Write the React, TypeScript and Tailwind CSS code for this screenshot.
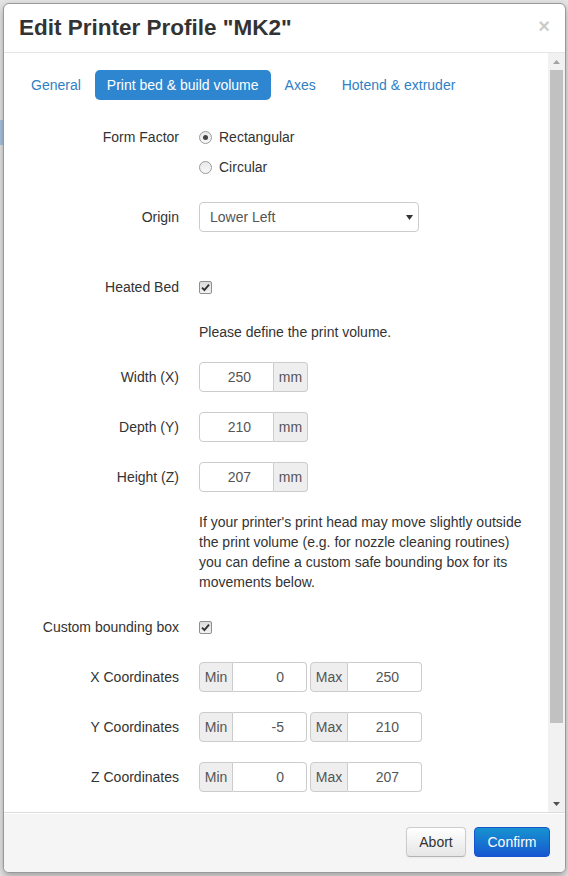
import React from "react";

const font = "font-['Liberation_Sans',Arial,Helvetica,sans-serif]";

function Radio({ checked }: { checked?: boolean }) {
  return (
    <span className="w-[13px] h-[13px] rounded-full border border-[#9a9a9a] bg-gradient-to-b from-[#e9e9e9] to-[#f8f8f8] flex items-center justify-center">
      {checked && <span className="w-[5px] h-[5px] rounded-full bg-[#444]" />}
    </span>
  );
}

function Checkbox() {
  return (
    <span className="w-[13px] h-[13px] rounded-[2px] border border-[#8f8f8f] bg-gradient-to-b from-[#dcdcdc] to-[#f3f3f3] flex items-center justify-center">
      <svg width="9" height="9" viewBox="0 0 9 9">
        <path d="M1 4.6 L3.4 7 L8 1.6" fill="none" stroke="#333" strokeWidth="1.9" />
      </svg>
    </span>
  );
}

function Row({ label, children, className = "" }: { label?: string; children: React.ReactNode; className?: string }) {
  return (
    <div className={`flex ${className}`}>
      <div className="w-[160px] shrink-0 text-right pt-[5px] leading-5 text-[#333]">{label}</div>
      <div className="ml-[20px]">{children}</div>
    </div>
  );
}

function MmInput({ value }: { value: string }) {
  return (
    <div className="flex h-[30px]">
      <div className="w-[75px] h-[30px] border border-[#ccc] rounded-l-[4px] bg-white text-right pr-[22px] leading-[28px] text-[#555]">{value}</div>
      <div className="w-[34px] h-[30px] border border-l-0 border-[#ccc] rounded-r-[4px] bg-[#eee] text-center leading-[28px] text-[#555]">mm</div>
    </div>
  );
}

function MinMax({ min, max }: { min: string; max: string }) {
  return (
    <div className="flex h-[30px]">
      <div className="w-[34px] h-[30px] border border-[#ccc] rounded-l-[4px] bg-[#eee] text-center leading-[28px] text-[#555]">Min</div>
      <div className="w-[74px] h-[30px] border border-l-0 border-[#ccc] rounded-r-[4px] bg-white text-right pr-[22px] leading-[28px] text-[#555]">{min}</div>
      <div className="ml-[3px] w-[38px] h-[30px] border border-[#ccc] rounded-l-[4px] bg-[#eee] text-center leading-[28px] text-[#555]">Max</div>
      <div className="w-[74px] h-[30px] border border-l-0 border-[#ccc] rounded-r-[4px] bg-white text-right pr-[22px] leading-[28px] text-[#555]">{max}</div>
    </div>
  );
}

export default function App() {
  return (
    <div className={`relative w-[568px] h-[876px] overflow-hidden bg-[#e4e4e4] ${font} text-[14px]`}>
      <div className="absolute left-0 top-[120px] w-[3px] h-[25px] bg-[#a8c5dd]" />
      <div className="absolute left-[3px] top-[3px] w-[563px] h-[870px] flex flex-col bg-white border border-[#999] rounded-[6px] shadow-[0_3px_7px_rgba(0,0,0,0.3)] overflow-hidden">
        {/* Header */}
        <div className="h-[49px] shrink-0 border-b border-[#e5e5e5] px-[15px] flex justify-between">
          <h3 className="mt-[9px] text-[22.5px] leading-[30px] font-bold text-[#333]">Edit Printer Profile "MK2"</h3>
          <span className="mt-[12px] text-[20px] leading-[20px] font-bold text-[#000] opacity-20">×</span>
        </div>

        {/* Body */}
        <div className="h-[759px] shrink-0 flex">
          <div className="flex-1 overflow-hidden pt-[15px] px-[15px]">
            {/* Tabs */}
            <div className="flex mt-[2px] mb-[22px]">
              <span className="px-[12px] py-[8px] leading-[14px] rounded-[5px] text-[#2f7fc6] mr-[2px]">General</span>
              <span className="px-[12px] py-[8px] leading-[14px] rounded-[5px] bg-[#2d86cf] text-white mr-[2px]">Print bed &amp; build volume</span>
              <span className="px-[12px] py-[8px] leading-[14px] rounded-[5px] text-[#2f7fc6] mr-[2px]">Axes</span>
              <span className="px-[12px] py-[8px] leading-[14px] rounded-[5px] text-[#2f7fc6]">Hotend &amp; extruder</span>
            </div>

            <Row label="Form Factor" className="mb-[20px]">
              <div className="flex flex-col">
                <div className="h-[30px] flex items-center gap-[7px] text-[#333]">
                  <Radio checked />
                  <span>Rectangular</span>
                </div>
                <div className="h-[30px] flex items-center gap-[7px] text-[#333]">
                  <Radio />
                  <span>Circular</span>
                </div>
              </div>
            </Row>

            <Row label="Origin" className="mb-[40px]">
              <div className="w-[220px] h-[30px] border border-[#ccc] rounded-[4px] bg-white flex items-center justify-between pl-[10px] pr-[5px] text-[#555]">
                <span>Lower Left</span>
                <svg width="7" height="5" viewBox="0 0 7 5"><path d="M0 0 H7 L3.5 5 Z" fill="#333" /></svg>
              </div>
            </Row>

            <Row label="Heated Bed" className="mb-[20px]">
              <div className="h-[30px] flex items-center"><Checkbox /></div>
            </Row>

            <div className="ml-[180px] leading-5 text-[#333] mb-[20px]">Please define the print volume.</div>

            <Row label="Width (X)" className="mb-[20px]"><MmInput value="250" /></Row>
            <Row label="Depth (Y)" className="mb-[20px]"><MmInput value="210" /></Row>
            <Row label="Height (Z)" className="mb-[20px]"><MmInput value="207" /></Row>

            <p className="ml-[180px] w-[333px] leading-5 text-[#333] mb-[20px]">
              If your printer's print head may move slightly outside the print volume (e.g. for nozzle cleaning routines) you can define a custom safe bounding box for its movements below.
            </p>

            <Row label="Custom bounding box" className="mb-[20px]">
              <div className="h-[30px] flex items-center"><Checkbox /></div>
            </Row>

            <Row label="X Coordinates" className="mb-[20px]"><MinMax min="0" max="250" /></Row>
            <Row label="Y Coordinates" className="mb-[20px]"><MinMax min="-5" max="210" /></Row>
            <Row label="Z Coordinates"><MinMax min="0" max="207" /></Row>
          </div>

          {/* Scrollbar */}
          <div className="w-[17px] shrink-0 bg-[#f1f1f1] flex flex-col">
            <div className="h-[17px] flex items-center justify-center">
              <svg width="7" height="4" viewBox="0 0 7 4"><path d="M0 4 L3.5 0 L7 4 Z" fill="#a3a3a3" /></svg>
            </div>
            <div className="mx-[2px] h-[653px] bg-[#c1c1c1]" />
            <div className="flex-1" />
            <div className="h-[17px] flex items-center justify-center">
              <svg width="7" height="4" viewBox="0 0 7 4"><path d="M0 0 H7 L3.5 4 Z" fill="#505050" /></svg>
            </div>
          </div>
        </div>

        {/* Footer */}
        <div className="flex-1 border-t border-[#ddd] bg-[#f5f5f5] shadow-[inset_0_1px_0_#fff] pt-[14px] pb-[15px] px-[15px] flex justify-end gap-[8px]">
          <button className="h-[30px] w-[60px] rounded-[4px] border border-[#ccc] border-b-[#b3b3b3] bg-gradient-to-b from-white to-[#e6e6e6] text-[#333] leading-5 shadow-[inset_0_1px_0_rgba(255,255,255,0.2),0_1px_2px_rgba(0,0,0,0.05)]">Abort</button>
          <button className="h-[30px] w-[76px] rounded-[4px] border border-[#0044cc] bg-gradient-to-b from-[#0088cc] to-[#0044cc] text-white leading-5 opacity-90">Confirm</button>
        </div>
      </div>
    </div>
  );
}
